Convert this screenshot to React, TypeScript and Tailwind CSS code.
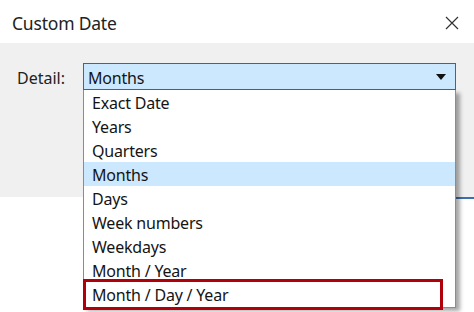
import React from "react";

const options = [
  "Exact Date",
  "Years",
  "Quarters",
  "Months",
  "Days",
  "Week numbers",
  "Weekdays",
  "Month / Year",
  "Month / Day / Year",
];

export default function App() {
  const selected = "Months";

  return (
    <div
      className="relative w-[474px] h-[312px] overflow-hidden bg-white text-[#141414]"
      style={{ fontFamily: '"Noto Sans", "Open Sans", sans-serif' }}
    >
      {/* title bar */}
      <div className="flex h-[43px] items-center justify-between pl-[12px] pr-[15px] pt-[3px]">
        <span className="text-[17.5px] tracking-[-0.2px] text-[#222]">Custom Date</span>
        <svg width="14" height="14" viewBox="0 0 14 14" className="text-[#333]">
          <path d="M1 1L13 13M13 1L1 13" stroke="currentColor" strokeWidth="1.2" />
        </svg>
      </div>

      {/* dialog body */}
      <div className="relative h-[154px] bg-[#f0f0f0] pl-[17px] pt-[20px]">
        <div className="flex items-start">
          <span className="w-[66px] pt-[3px] text-[16px] text-[#222]">Detail:</span>
          <div className="relative w-[373px]">
            <div className="flex h-[27px] items-center justify-between border border-[#0078d7] bg-[#cce8ff] pl-[4px] pr-[9px]">
              <span className="pt-[2px] text-[16px] tracking-[-0.2px]">{selected}</span>
              <svg width="10" height="6" viewBox="0 0 10 6">
                <path d="M0 0H10L5 6Z" fill="#111" />
              </svg>
            </div>

            {/* open list */}
            <div className="absolute left-0 top-[27px] z-10 w-[373px] border border-[#8c8c8c] border-t-0 bg-white pb-[1px] shadow-[4px_3px_4px_rgba(0,0,0,0.35)]">
              {options.map((o) => (
                <div
                  key={o}
                  className={
                    "flex h-[24px] items-center pl-[8px] pt-[2px] text-[16px] tracking-[-0.2px] " +
                    (o === selected ? "bg-[#cce8ff]" : "")
                  }
                >
                  {o}
                </div>
              ))}
              {/* highlight box around last option */}
              <div className="pointer-events-none absolute bottom-[-3px] left-[-1px] h-[31px] w-[360px] border-[3px] border-[#b0000a]" />
            </div>
          </div>
        </div>
      </div>
      <div className="absolute right-0 top-[197px] h-[2px] w-[18px] bg-[#3c6fb0]" />
    </div>
  );
}
